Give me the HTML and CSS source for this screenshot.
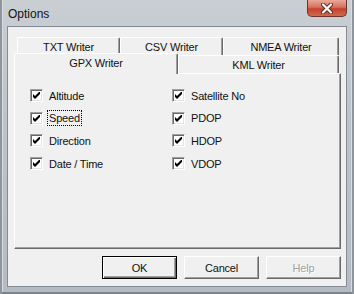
FILE: index.html
```html
<!DOCTYPE html>
<html lang="en">
<head>
    <meta charset="UTF-8">
    <title>Options</title>
    <link rel="stylesheet" href="styles.css">
</head>
<body>
    <div class="window">
        <div class="titlebar">
            <span class="title">Options</span>
            <span class="close">
                <svg width="14" height="11" viewBox="0 0 14 11">
                    <path d="M3 1.5 L11 9.5 M11 1.5 L3 9.5" stroke="#5a2a22" stroke-width="4" stroke-linecap="round"/>
                    <path d="M3 1.5 L11 9.5 M11 1.5 L3 9.5" stroke="#fff" stroke-width="2.2" stroke-linecap="round"/>
                </svg>
            </span>
        </div>
        <div class="client">
            <div class="tabs">
                <div class="tab-row back">
                    <div class="tab w-txt">TXT Writer</div>
                    <div class="tab w-csv">CSV Writer</div>
                    <div class="tab w-nmea">NMEA Writer</div>
                </div>
                <div class="tab-row front">
                    <div class="tab selected w-gpx">GPX Writer</div>
                    <div class="tab w-kml">KML Writer</div>
                </div>
            </div>
            <div class="panel">
                <div class="checks">
                    <label class="check"><span class="box"><svg width="7" height="7" viewBox="0 0 7 7"><path d="M0 2 L2 4 L7 -1 L7 2 L2 7 L0 5 Z" fill="#000"/></svg></span><span class="text">Altitude</span></label>
                    <label class="check"><span class="box"><svg width="7" height="7" viewBox="0 0 7 7"><path d="M0 2 L2 4 L7 -1 L7 2 L2 7 L0 5 Z" fill="#000"/></svg></span><span class="text">Satellite No</span></label>
                    <label class="check"><span class="box"><svg width="7" height="7" viewBox="0 0 7 7"><path d="M0 2 L2 4 L7 -1 L7 2 L2 7 L0 5 Z" fill="#000"/></svg></span><span class="text focus">Speed</span></label>
                    <label class="check"><span class="box"><svg width="7" height="7" viewBox="0 0 7 7"><path d="M0 2 L2 4 L7 -1 L7 2 L2 7 L0 5 Z" fill="#000"/></svg></span><span class="text">PDOP</span></label>
                    <label class="check"><span class="box"><svg width="7" height="7" viewBox="0 0 7 7"><path d="M0 2 L2 4 L7 -1 L7 2 L2 7 L0 5 Z" fill="#000"/></svg></span><span class="text">Direction</span></label>
                    <label class="check"><span class="box"><svg width="7" height="7" viewBox="0 0 7 7"><path d="M0 2 L2 4 L7 -1 L7 2 L2 7 L0 5 Z" fill="#000"/></svg></span><span class="text">HDOP</span></label>
                    <label class="check"><span class="box"><svg width="7" height="7" viewBox="0 0 7 7"><path d="M0 2 L2 4 L7 -1 L7 2 L2 7 L0 5 Z" fill="#000"/></svg></span><span class="text">Date / Time</span></label>
                    <label class="check"><span class="box"><svg width="7" height="7" viewBox="0 0 7 7"><path d="M0 2 L2 4 L7 -1 L7 2 L2 7 L0 5 Z" fill="#000"/></svg></span><span class="text">VDOP</span></label>
                </div>
            </div>
            <div class="buttons">
                <button class="btn default">OK</button>
                <button class="btn">Cancel</button>
                <button class="btn" disabled>Help</button>
            </div>
        </div>
    </div>
</body>
</html>
```

FILE: styles.css
```css
body {
    margin: 0;
    font-family: 'Liberation Sans', Arial, sans-serif;
    font-size: 11px;
    letter-spacing: -0.2px;
    color: #111;
}
.window {
    width: 354px;
    height: 294px;
    box-sizing: border-box;
    display: flex;
    flex-direction: column;
    padding: 0 7px 7px;
    background: linear-gradient(to bottom, #c9ced3 0%, #bcc3ca 40%, #b4bbc2 100%);
    box-shadow: inset 2px 0 0 #8e959c, inset -2px 0 0 #8e959c, inset 0 -2px 0 #7d848b, inset 3px 0 0 #d9dde1, inset -3px 0 0 #d9dde1;
}
.titlebar {
    height: 26px;
    display: flex;
    justify-content: space-between;
    align-items: flex-start;
}
.title {
    margin-top: 7px;
    margin-left: 1px;
    font-size: 12px;
    letter-spacing: 0;
}
.close {
    width: 40px;
    height: 17px;
    box-sizing: border-box;
    display: flex;
    align-items: center;
    justify-content: center;
    border: 1px solid #6e3329;
    border-top: none;
    border-radius: 0 0 5px 5px;
    background: linear-gradient(to bottom, #e9a99b 0%, #d8715d 45%, #c4422b 55%, #d06a4e 100%);
}
.client {
    flex: 1;
    background: #f0f0f0;
    border: 1px solid #858b92;
    padding: 10px 5px 0 6px;
}
.tabs {
    width: 327px;
    display: flex;
    flex-direction: column;
}
.tab-row {
    display: flex;
    height: 18px;
}
.tab-row.back {
    padding-left: 3px;
}
.tab {
    box-sizing: border-box;
    height: 18px;
    display: flex;
    align-items: center;
    justify-content: center;
    border-top: 1px solid #fff;
    border-left: 1px solid #fff;
    border-right: 1px solid #696969;
    box-shadow: inset -1px 0 0 #a0a0a0;
    border-radius: 2px 2px 0 0;
    background: #f0f0f0;
}
.w-txt { width: 103px; }
.w-csv { width: 103px; }
.w-nmea { width: 116px; }
.w-gpx { width: 164px; }
.w-kml { width: 161px; }
.tab.selected {
    position: relative;
    z-index: 1;
    height: 21px;
    margin-top: -2px;
    padding-bottom: 3px;
}
.panel {
    box-sizing: border-box;
    width: 327px;
    height: 176px;
    border-top: 1px solid #fff;
    border-left: 1px solid #fff;
    border-right: 1px solid #696969;
    border-bottom: 1px solid #696969;
    box-shadow: inset -1px -1px 0 #a0a0a0;
    padding: 15px 0 0 15px;
}
.checks {
    display: grid;
    grid-template-columns: 142px 140px;
    grid-auto-rows: 13px;
    row-gap: 9.7px;
}
.check {
    display: flex;
    align-items: center;
    gap: 4px;
}
.box {
    box-sizing: border-box;
    width: 13px;
    height: 13px;
    display: flex;
    align-items: center;
    justify-content: center;
    background: #fff;
    border-top: 1px solid #a0a0a0;
    border-left: 1px solid #a0a0a0;
    border-right: 1px solid #fff;
    border-bottom: 1px solid #fff;
    box-shadow: inset 1px 1px 0 #696969, inset -1px -1px 0 #e3e3e3;
}
.text {
    padding: 1px 1px;
    border: 1px dotted transparent;
}
.text.focus {
    border-color: #000;
}
.buttons {
    display: flex;
    justify-content: flex-end;
    gap: 7px;
    margin-top: 7px;
    width: 327px;
}
.btn {
    box-sizing: border-box;
    width: 75px;
    height: 23px;
    font-family: 'Liberation Sans', Arial, sans-serif;
    font-size: 11px;
    letter-spacing: -0.2px;
    color: #111;
    background: #f0f0f0;
    border-top: 1px solid #fff;
    border-left: 1px solid #fff;
    border-right: 1px solid #696969;
    border-bottom: 1px solid #696969;
    box-shadow: inset -1px -1px 0 #a0a0a0;
    padding: 0;
}
.btn.default {
    border: 1px solid #000;
    box-shadow: inset 1px 1px 0 #fff, inset -1px -1px 0 #696969, inset -2px -2px 0 #a0a0a0;
}
.btn:disabled {
    color: #a0a0a0;
    text-shadow: 1px 1px 0 #fff;
}
```
